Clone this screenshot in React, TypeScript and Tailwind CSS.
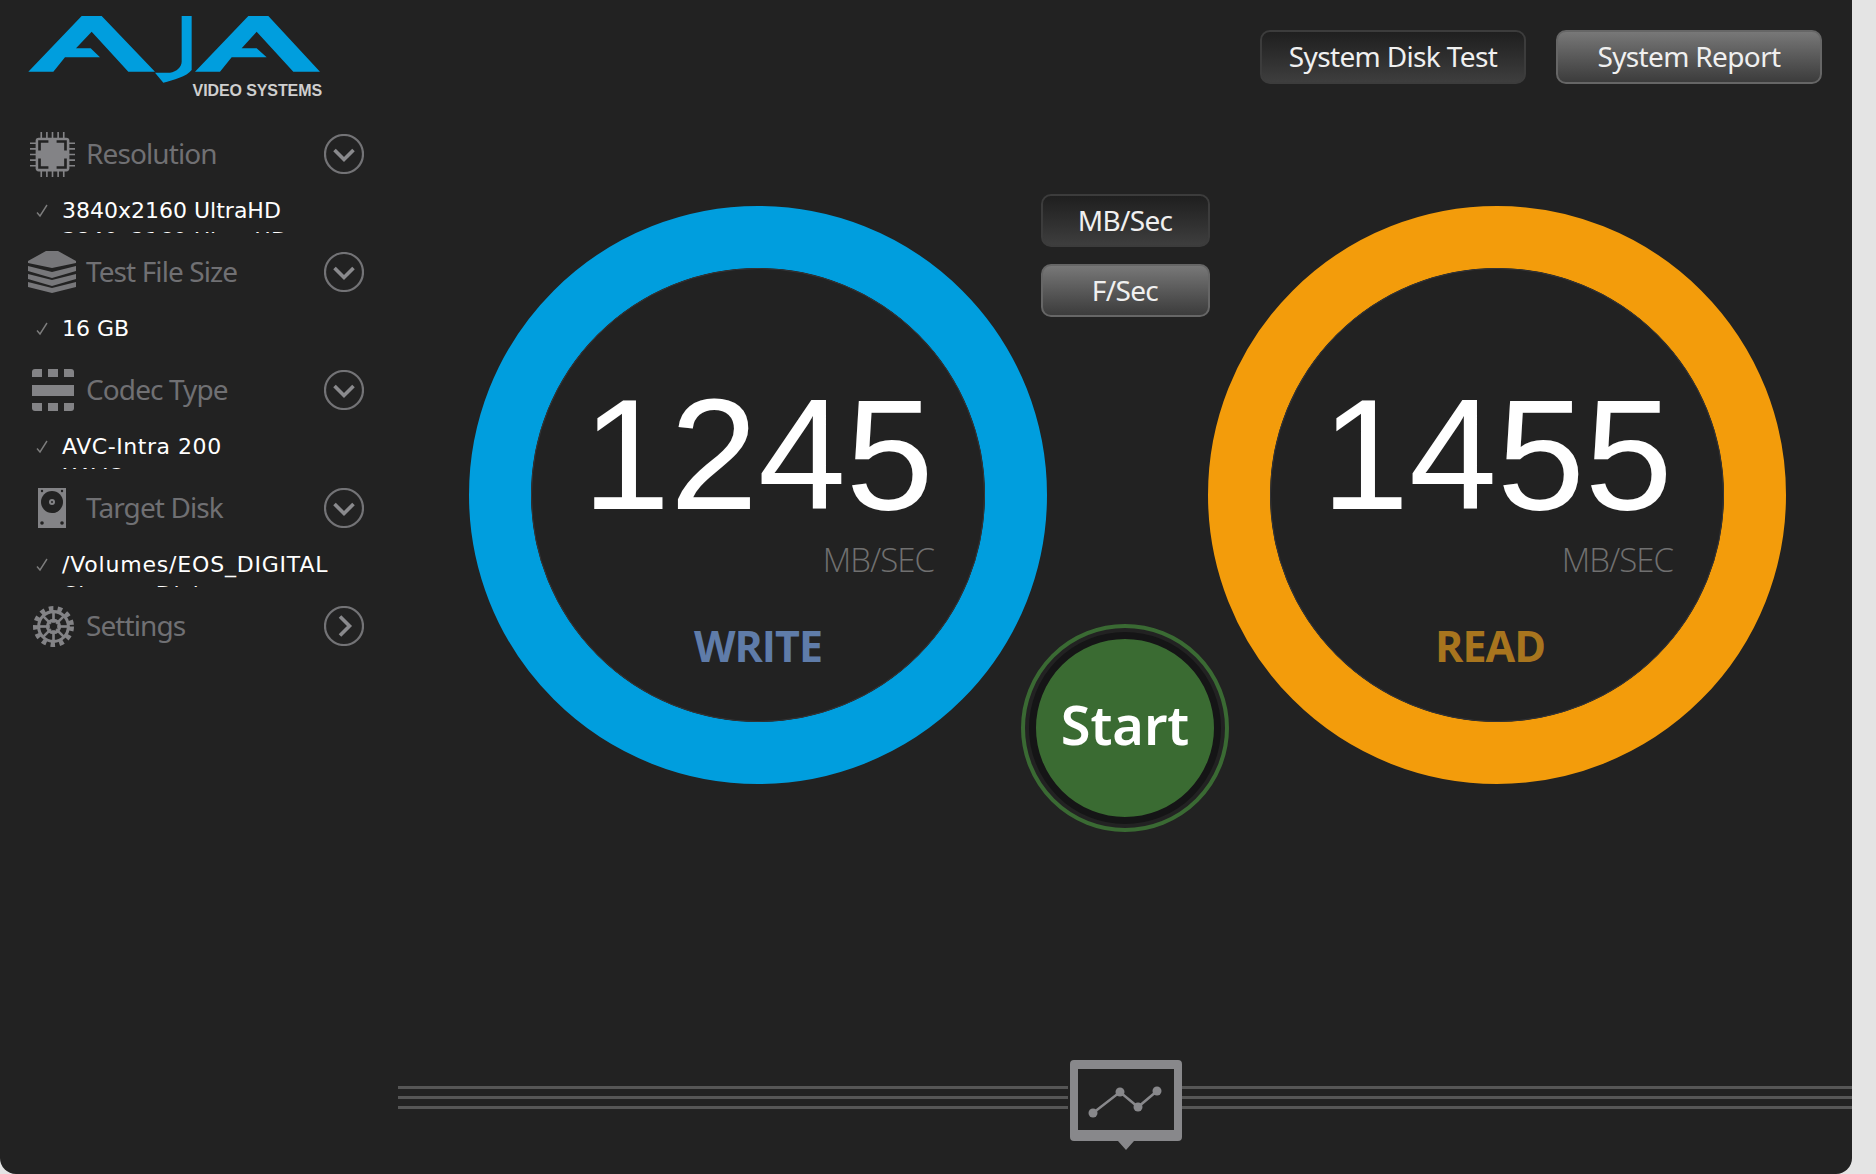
import React from "react";

const G = "#838386";

function ChipIcon() {
  return (
    <svg width="45" height="45" viewBox="0 0 44 44">
      <g stroke={G} strokeWidth="1.6">
        {[11, 16.5, 22, 27.5, 33].map((p) => (
          <g key={p}>
            <path d={`M${p} 0V44`} />
            <path d={`M0 ${p}H44`} />
          </g>
        ))}
      </g>
      <rect x="5.5" y="5.5" width="33" height="33" rx="3" fill={G} />
      <g fill="#222222">
        <path d="M8 8h10v2.6h-7.4V18H8z" />
        <path d="M36 8H26v2.6h7.4V18H36z" />
        <path d="M8 36h10v-2.6h-7.4V26H8z" />
        <path d="M36 36H26v-2.6h7.4V26H36z" />
      </g>
    </svg>
  );
}

function StackIcon() {
  return (
    <svg width="48" height="42" viewBox="0 0 48 42">
      <path d="M0 10 L18 0 H30 L48 10 L48 12 L24 17 L0 12Z" fill="#77777a" />
      <path d="M0 15 L24 21 L48 15 V20 L24 27 L0 20Z" fill="#77777a" />
      <path d="M0 23 L24 29 L48 23 V28 L24 35 L0 28Z" fill="#77777a" />
      <path d="M0 31 L24 37 L48 31 V36 L24 42 L0 36Z" fill="#77777a" />
    </svg>
  );
}

function CodecIcon() {
  return (
    <svg width="42" height="42" viewBox="0 0 42 42" className="ml-[2px]">
      <g fill={G}>
        <path d="M3 0h7v8H0V3a3 3 0 0 1 3-3z" />
        <rect x="16" y="0" width="10" height="8" />
        <path d="M32 0h7a3 3 0 0 1 3 3v5H32z" />
        <rect x="0" y="16" width="42" height="11" />
        <path d="M0 34h10v8H3a3 3 0 0 1-3-3z" />
        <rect x="16" y="34" width="10" height="8" />
        <path d="M32 34h10v5a3 3 0 0 1-3 3h-7z" />
      </g>
    </svg>
  );
}

function DiskIcon() {
  return (
    <svg width="28" height="40" viewBox="0 0 28 40">
      <rect width="28" height="40" fill={G} />
      <circle cx="14" cy="14" r="11" fill="#222222" />
      <path d="M14 25a11 11 0 0 0 8-4l-5-5-5 2z" fill="#222222" />
      <circle cx="14" cy="14" r="3" fill={G} />
      <circle cx="14" cy="14" r="1" fill="#222222" />
      <circle cx="4" cy="35" r="1.8" fill="#222222" />
      <circle cx="24" cy="35" r="1.8" fill="#222222" />
      <circle cx="4" cy="3" r="1.2" fill="#222222" />
      <circle cx="24" cy="3" r="1.2" fill="#222222" />
    </svg>
  );
}

function GearIcon() {
  const spokes = [0, 45, 90, 135];
  return (
    <svg width="41" height="41" viewBox="0 0 40 40" className="ml-[3px]">
      <circle cx="20" cy="20" r="17.5" fill="none" stroke={G} strokeWidth="5" strokeDasharray="4.4 4.2" />
      <circle cx="20" cy="20" r="14.5" fill="none" stroke={G} strokeWidth="3" />
      <circle cx="20" cy="20" r="6" fill="none" stroke={G} strokeWidth="3" />
      {spokes.map((a) => (
        <path key={a} d="M20 6V34" stroke={G} strokeWidth="2.6" transform={`rotate(${a} 20 20)`} />
      ))}
      <circle cx="20" cy="20" r="3.6" fill="#222222" />
    </svg>
  );
}

function Chevron({ right }: { right?: boolean }) {
  return (
    <svg width="40" height="40" viewBox="0 0 40 40" className="shrink-0">
      <circle cx="20" cy="20" r="19" fill="none" stroke="#737376" strokeWidth="2.2" />
      <path
        d={right ? "M16 10.5L25.5 20L16 29.5" : "M10.5 16L20 25.5L29.5 16"}
        fill="none"
        stroke="#8a8a8d"
        strokeWidth="3.6"
      />
    </svg>
  );
}

function Check() {
  return (
    <svg width="12" height="14" viewBox="0 0 12 14" className="shrink-0">
      <path d="M1 8.5L4 12L11 1" fill="none" stroke="#7d7d7d" strokeWidth="1.4" />
    </svg>
  );
}

function Section({
  icon,
  label,
  values,
  right,
  valueClass = "",
}: {
  icon: React.ReactNode;
  label: string;
  values?: string[];
  right?: boolean;
  valueClass?: string;
}) {
  return (
    <div className="h-[118px] shrink-0">
      <div className="flex h-[40px] items-center">
        <div className="-ml-[1px] flex w-[50px] shrink-0 items-center justify-center">{icon}</div>
        <span className="ml-[9px] flex-1 pb-[2px] font-['Noto_Sans'] text-[28px] leading-none tracking-[-0.9px] text-[#707073]">
          {label}
        </span>
        <Chevron right={right} />
      </div>
      {values && (
        <div className={`mt-[22px] h-[37px] overflow-hidden font-['DejaVu_Sans'] text-[22px] leading-[30px] text-white ${valueClass}`}>
          {values.map((v, i) => (
            <div key={v} className="flex h-[30px] items-center pl-[8px]">
              <div className="w-[26px] shrink-0">{i === 0 && <Check />}</div>
              <span className="whitespace-nowrap">{v}</span>
            </div>
          ))}
        </div>
      )}
    </div>
  );
}

function TopButton({ label, active, size }: { label: string; active?: boolean; size: string }) {
  return (
    <button
      className={`${size} rounded-[10px] border-2 pb-[2px] font-['Noto_Sans'] text-[28px] leading-none tracking-[-0.65px] text-[#f0f0f0] ${
        active
          ? "border-[#666666] bg-gradient-to-b from-[#787878] to-[#3c3c3c]"
          : "border-[#3c3c3c] bg-gradient-to-b from-[#1f1f1f] to-[#3e3e3e]"
      }`}
    >
      {label}
    </button>
  );
}

function Gauge({
  value,
  label,
  ring,
  labelClass,
}: {
  value: string;
  label: string;
  ring: string;
  labelClass: string;
}) {
  return (
    <div className={`h-[578px] w-[578px] shrink-0 rounded-full border-[62px] ${ring}`}>
      <div className="flex h-full w-full flex-col items-center rounded-full border border-[#353537] bg-[#222222] pt-[106px]">
        <div className="font-['Liberation_Sans'] text-[158px] leading-none text-white">{value}</div>
        <div className="mr-[50px] mt-[10px] self-end font-['Open_Sans'] text-[33px] font-light leading-none tracking-[-1px] text-[#707070]">
          MB/SEC
        </div>
        <div className={`mt-[48px] font-['Open_Sans'] text-[43px] font-bold leading-none tracking-[-1px] ${labelClass}`}>
          {label}
        </div>
      </div>
    </div>
  );
}

function Lines() {
  return (
    <div className="mt-[26px] flex flex-1 flex-col gap-[7px] self-start">
      <div className="h-[3px] bg-[#565656]" />
      <div className="h-[3px] bg-[#565656]" />
      <div className="h-[3px] bg-[#565656]" />
    </div>
  );
}

export default function App() {
  return (
    <div className="flex h-[1174px] w-[1876px] overflow-hidden bg-[#e4e4e4]">
      <div className="flex h-full w-[1852px] rounded-b-[16px] bg-[#222222]">
        <aside className="flex w-[398px] shrink-0 flex-col pl-[28px] pr-[34px] pt-[16px]">
          <div className="flex h-[118px] w-[295px] shrink-0 flex-col items-end">
            <svg width="295" height="68" viewBox="84 48 885 204" className="block">
              <g fill="#009ede">
                <path d="M85 215L245 48H305L465 215H385L275 95L228 145H272L300 172H195L160 215Z" />
                <path d="M585 215L745 48H805L960 215H880L770 95L725 145H770L800 172H695L660 215Z" />
                <path d="M545 48H575V210C560 230 520 240 490 248L465 218H510C530 215 545 200 545 185Z" />
              </g>
            </svg>
            <div className="mr-[1px] font-['Liberation_Sans'] text-[16px] font-bold leading-[14px] tracking-[-0.1px] text-[#cfcfcf]">
              VIDEO SYSTEMS
            </div>
          </div>
          <Section icon={<ChipIcon />} label="Resolution" values={["3840x2160 UltraHD", "3840x2160 Ultra HD"]} />
          <Section icon={<StackIcon />} label="Test File Size" values={["16 GB"]} />
          <Section icon={<CodecIcon />} label="Codec Type" values={["AVC-Intra 200", "XAVC"]} valueClass="tracking-[0.55px]" />
          <Section icon={<DiskIcon />} label="Target Disk" values={["/Volumes/EOS_DIGITAL", "Choose Disk"]} valueClass="tracking-[0.8px]" />
          <Section icon={<GearIcon />} label="Settings" right />
        </aside>

        <main className="flex min-w-0 flex-1 flex-col">
          <div className="flex justify-end gap-[30px] pr-[30px] pt-[30px]">
            <TopButton label="System Disk Test" size="h-[54px] w-[266px]" />
            <TopButton label="System Report" size="h-[54px] w-[266px]" active />
          </div>

          <div className="mt-[122px] flex pl-[71px]">
            <Gauge value="1245" label="WRITE" ring="border-[#009ede]" labelClass="text-[#5f7ca9]" />
            <div className="mr-[5px] flex w-[156px] shrink-0 flex-col items-center">
              <div className="-mt-[12px] flex flex-col gap-[17px]">
                <TopButton label="MB/Sec" size="h-[53px] w-[169px]" />
                <TopButton label="F/Sec" size="h-[53px] w-[169px]" active />
              </div>
              <div className="mt-[307px] flex h-[208px] w-[208px] shrink-0 items-center justify-center rounded-full border-4 border-[#3a6a33]">
                <div className="flex h-[192px] w-[192px] items-center justify-center rounded-full border-[7px] border-[#151516] bg-[#3a6b32] pb-[8px] font-['Noto_Sans'] text-[54px] font-semibold leading-none text-white">
                  Start
                </div>
              </div>
            </div>
            <Gauge value="1455" label="READ" ring="border-[#f39c0b]" labelClass="mr-[14px] text-[#a8751e]" />
          </div>

          <div className="mb-[24px] mt-auto flex">
            <Lines />
            <svg width="112" height="90" viewBox="0 0 112 90" className="ml-[2px] block shrink-0">
              <path
                fillRule="evenodd"
                d="M4 0H108a4 4 0 0 1 4 4V77a4 4 0 0 1-4 4H64L56 90L48 81H4a4 4 0 0 1-4-4V4a4 4 0 0 1 4-4ZM8 9V70H104V9Z"
                fill="#88888b"
              />
              <path d="M23 53L50 32L68 47L87 31" fill="none" stroke="#88888b" strokeWidth="2.5" />
              <circle cx="23" cy="53" r="4.5" fill="#88888b" />
              <circle cx="50" cy="32" r="4.5" fill="#88888b" />
              <circle cx="68" cy="47" r="4.5" fill="#88888b" />
              <circle cx="87" cy="31" r="4.5" fill="#88888b" />
            </svg>
            <Lines />
          </div>
        </main>
      </div>
    </div>
  );
}
